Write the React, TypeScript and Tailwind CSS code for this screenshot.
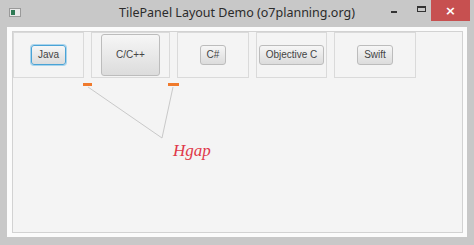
import React from "react";

type Tile = {
  label: string;
  width: string;
  big?: boolean;
  focused?: boolean;
};

const TILES: Tile[] = [
  { label: "Java", width: "w-[71px]", focused: true },
  { label: "C/C++", width: "w-[79px]", big: true },
  { label: "C#", width: "w-[72px]" },
  { label: "Objective C", width: "w-[71px]" },
  { label: "Swift", width: "w-[82px]" },
];

const TitleBar = () => (
  <div className="relative h-[27px] flex items-center justify-center">
    {/* app icon */}
    <svg className="absolute left-[9px] top-[8px]" width="12" height="9" viewBox="0 0 12 9">
      <rect x="0.5" y="0.5" width="11" height="8" fill="#e9e9e9" stroke="#9a9a9a" />
      <rect x="2" y="2" width="4" height="5" fill="#2f7a55" />
    </svg>
    <p className="text-[12.5px] text-[#2b2b2b] font-['Noto_Sans',sans-serif] -mt-[1px]">
      TilePanel Layout Demo (o7planning.org)
    </p>
    {/* window buttons */}
    <div className="absolute right-[4px] top-0 flex items-start">
      <div className="w-[26px] h-[21px] flex items-center pl-[6px]">
        <div className="w-[6px] h-[2px] bg-[#333] mt-[3px]" />
      </div>
      <div className="w-[20px] h-[21px] flex items-center justify-center">
        <div className="w-[9px] h-[6px] border border-[#333] border-t-2 -mt-[4px]" />
      </div>
      <div className="w-[39px] h-[21px] bg-[#c75050] flex items-center justify-center text-white text-[13px] font-bold font-['DejaVu_Sans',sans-serif] leading-none">
        ×
      </div>
    </div>
  </div>
);

const FxButton = ({ tile }: { tile: Tile }) => (
  <button
    className={`rounded-[3px] bg-gradient-to-b from-[#f6f6f6] to-[#dcdcdc] text-[10px] text-[#444] font-['Liberation_Sans',sans-serif] leading-none ${
      tile.big ? "w-[59px] h-[42px]" : "h-[20px] px-[6px]"
    } ${
      tile.focused
        ? "border border-[#4aa3d6] shadow-[0_0_0_1px_#a9d4ec]"
        : "border border-[#bcbcbc]"
    }`}
  >
    {tile.label}
  </button>
);

export default function App() {
  return (
    <div className="w-[474px] h-[245px] bg-[#c8c8c8] flex flex-col overflow-hidden">
      <TitleBar />
      <div className="mx-[7px] h-[210px] bg-[#fbfbfb] pt-[4px] pl-[5px] pr-[4px] pb-[4px] flex">
        <div className="relative flex-1 border border-[#d2d2d2] bg-[#f4f4f4]">
          {/* tiles */}
          <div className="flex gap-[7px]">
            {TILES.map((tile, i) => (
              <div
                key={i}
                className={`${tile.width} h-[46px] border border-[#dadada] flex items-center justify-center`}
              >
                <FxButton tile={tile} />
              </div>
            ))}
          </div>

          {/* hgap annotation */}
          <div className="absolute left-[70px] top-[51px] w-[9px] h-[3px] bg-[#f07a2c]" />
          <div className="absolute left-[155px] top-[51px] w-[11px] h-[3px] bg-[#f07a2c]" />
          <svg className="absolute left-0 top-0" width="450" height="200">
            <line x1="75" y1="55" x2="149" y2="106" stroke="#c9c9c9" strokeWidth="1" />
            <line x1="160" y1="55" x2="149" y2="106" stroke="#c9c9c9" strokeWidth="1" />
          </svg>
          <p className="absolute left-[160px] top-[106px] text-[17px] italic text-[#e0394a] font-['Liberation_Serif',serif]">
            Hgap
          </p>
        </div>
      </div>
    </div>
  );
}
